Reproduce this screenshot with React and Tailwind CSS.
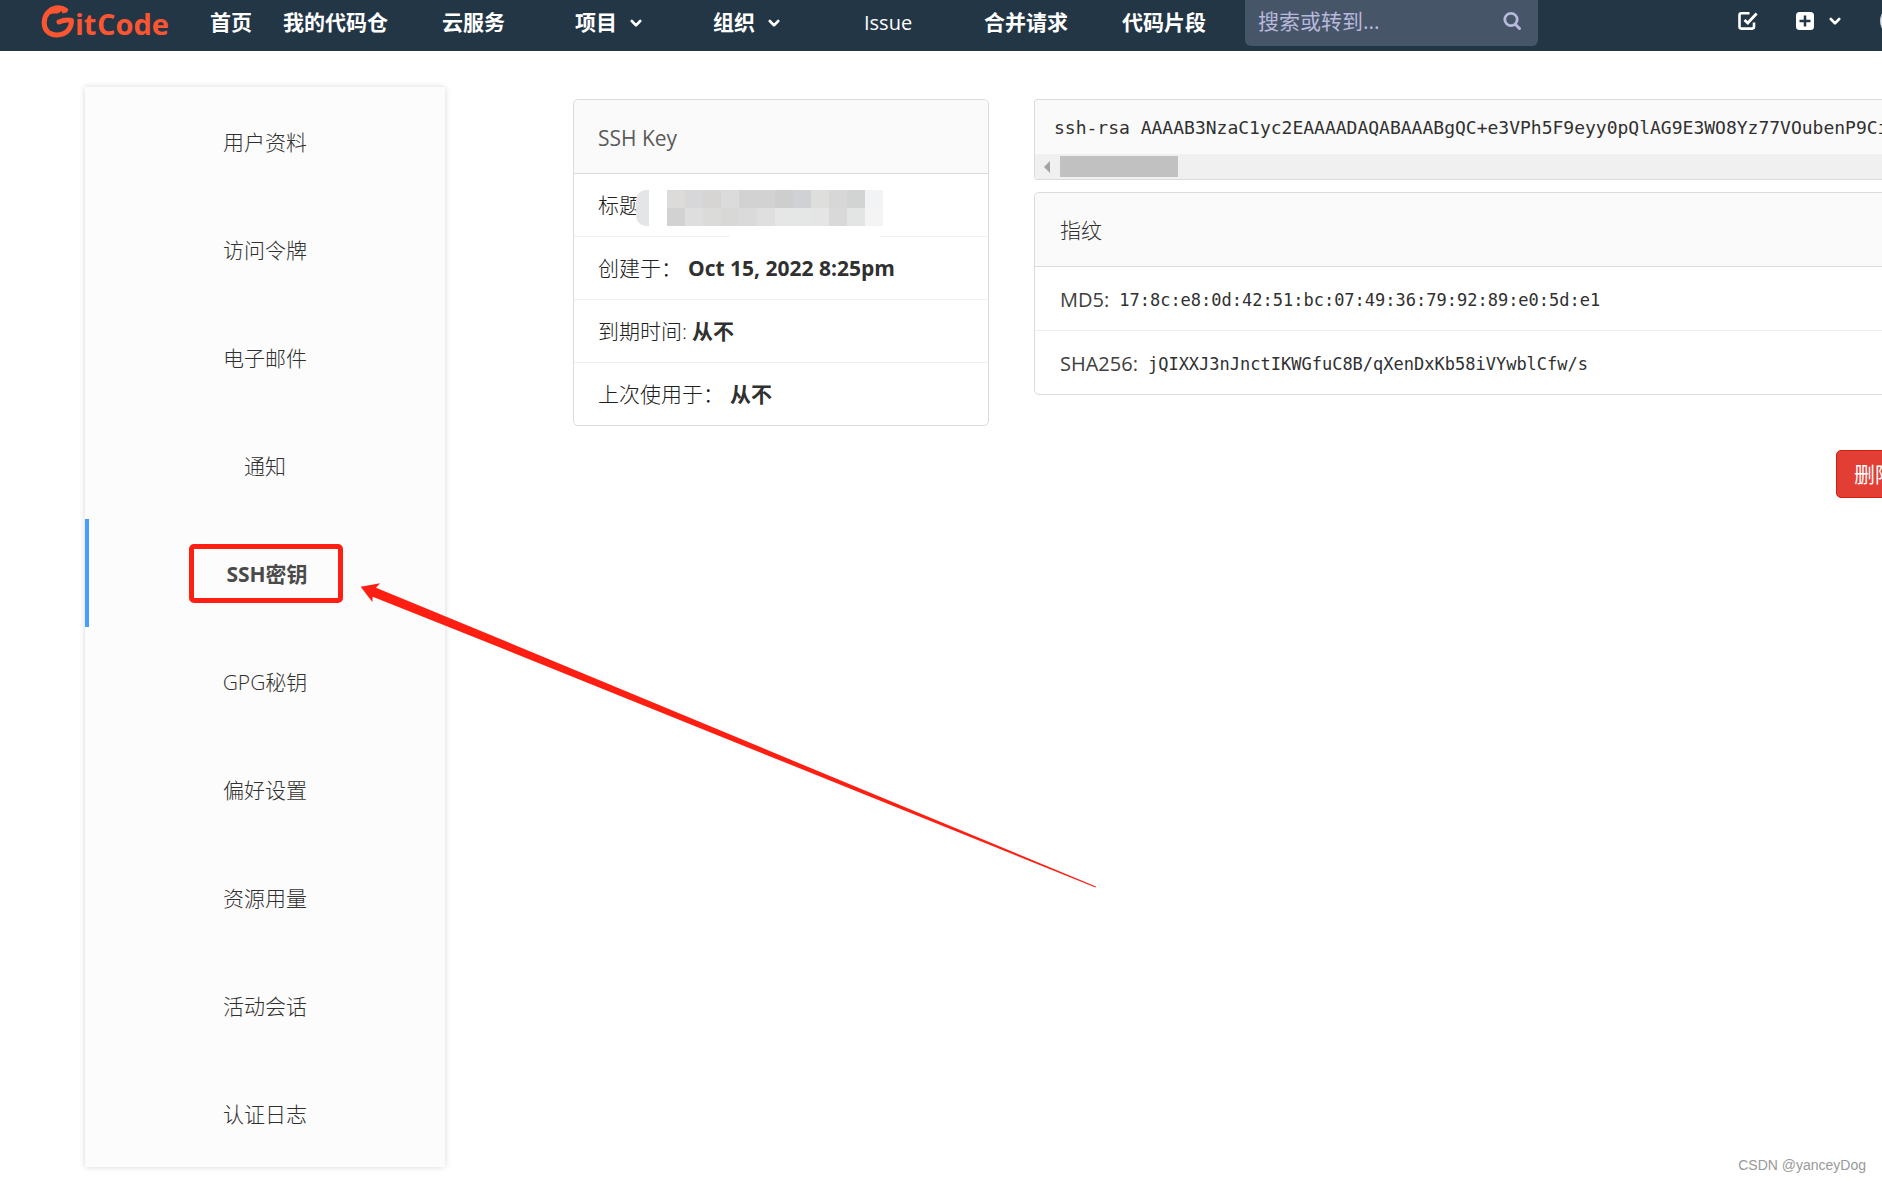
import React from "react";

const navItems = [
  { label: "首页", className: "ml-[41px] font-bold" },
  { label: "我的代码仓", className: "ml-[31px] font-bold" },
  { label: "云服务", className: "ml-[54px] font-bold" },
  { label: "项目", className: "ml-[70px] font-bold", menu: true },
  { label: "组织", className: "ml-[71px] font-bold", menu: true },
  { label: "Issue", className: "ml-[84px] w-[49px] text-[20px]" },
  { label: "合并请求", className: "ml-[71px] font-bold" },
  { label: "代码片段", className: "ml-[54px] font-bold" },
];

const sideItems = [
  "用户资料",
  "访问令牌",
  "电子邮件",
  "通知",
  "SSH密钥",
  "GPG秘钥",
  "偏好设置",
  "资源用量",
  "活动会话",
  "认证日志",
];

const mosaicColors = [
  "#dcdbd9", "#d7d7d9", "#d6d5d3", "#dbdbdb", "#d2d2d2", "#d2d2d2",
  "#cecece", "#d0d1d4", "#dededc", "#d7d7d7", "#d2d4d4", "#f2f3f5",
  "#d2d2d2", "#dedede", "#dbdbda", "#d8d8d6", "#dadada", "#dfdfe0",
  "#e6e6e6", "#e5e7e7", "#e5e5e5", "#d9d9d9", "#e3e5e4", "#f4f4f4",
];

const Chevron = () => (
  <svg width="12" height="9" viewBox="0 0 12 9" fill="none" aria-hidden="true">
    <path
      d="M1.8 2 L6 6.4 L10.2 2"
      stroke="currentColor"
      strokeWidth="2.6"
      strokeLinecap="round"
      strokeLinejoin="round"
    />
  </svg>
);

const Logo = () => (
  <svg width="128" height="46" viewBox="0 0 128 46" role="img" aria-label="GitCode">
    <path
      d="M24.5 10 C19 6 11 7.5 7 12.5 C2 18 2.2 27 6 31 C11 36.5 21.5 36 26.5 31 C29.5 28 30.5 24.5 30.5 20.5 C26 19.5 22 20.2 18 22"
      fill="none"
      stroke="#fc5531"
      strokeWidth="5"
      strokeLinecap="round"
      strokeLinejoin="round"
    />
    <path d="M5 18 L7 13 L7.6 12.2 L9 14.6 L12 13.4 H17 L20.4 11 L21.6 13.4 L25 12.6 L24 8 L14 7 L7 10 Z" fill="#fc5531" />
    <g fill="#fc5531" fontFamily="'Open Sans', sans-serif" fontWeight="700">
      <text x="34" y="35" fontSize="29">it</text>
      <text x="56" y="35" fontSize="29">Code</text>
    </g>
  </svg>
);

const Header = () => (
  <header className="h-[51px] bg-[#233646] text-white">
    <div className="flex h-[46px] w-[calc(100%+32px)] items-center pl-[41px]">
      <a href="#home" className="shrink-0">
        <Logo />
      </a>
      <nav className="flex shrink-0 items-center whitespace-nowrap text-[21px]">
        {navItems.map((item) => (
          <a
            key={item.label}
            href="#nav"
            className={`flex items-center gap-[13px] ${item.className}`}
          >
            {item.label}
            {item.menu && <Chevron />}
          </a>
        ))}
      </nav>
      <div className="ml-[39px] flex h-[46px] w-[293px] shrink-0 items-center rounded-b-[6px] bg-[#475569] pr-4 pb-[2px] pl-[13px]">
        <input
          type="text"
          aria-label="搜索或转到"
          placeholder="搜索或转到..."
          className="min-w-0 flex-1 bg-transparent text-[21px] outline-none placeholder:text-[#b7b9dc]"
        />
        <svg width="20" height="24" viewBox="0 0 20 24" fill="none" aria-hidden="true">
          <circle cx="9" cy="9.5" r="6.2" stroke="#b7b9dc" strokeWidth="2.8" />
          <path d="M13.5 14.5 L17.5 18.5" stroke="#b7b9dc" strokeWidth="3" strokeLinecap="round" />
        </svg>
      </div>
      <div className="ml-auto flex items-center pb-1">
        <button type="button" aria-label="待办事项" className="mr-[38px]">
          <svg width="20" height="20" viewBox="0 0 20 20" fill="none">
            <path
              d="M11.5 2.3 H3.3 Q1.5 2.3 1.5 4 V15.6 Q1.5 17.6 3.3 17.6 H14.2 Q16 17.6 16 15.6 V11.5"
              stroke="white"
              strokeWidth="2.6"
            />
            <path d="M6.5 9 L9.8 12 L18.6 2.5" stroke="white" strokeWidth="2.8" />
          </svg>
        </button>
        <button type="button" aria-label="新建" className="mr-[39px] flex items-center gap-[15px]">
          <svg width="18" height="18" viewBox="0 0 18 18">
            <rect width="18" height="18" rx="3.5" fill="white" />
            <path d="M9 3.5 V14.5 M3.5 9 H14.5" stroke="#233646" strokeWidth="2.5" />
          </svg>
          <Chevron />
        </button>
        <button
          type="button"
          aria-label="用户"
          className="size-[34px] rounded-full border border-[#c5cbd3] bg-[#e8eaf0]"
        />
      </div>
    </div>
  </header>
);

const SideMenu = () => (
  <aside className="w-[360px] shrink-0 bg-[#fcfcfc] shadow-[0_0_6px_rgba(0,0,0,0.16)]">
    <ul>
      {sideItems.map((item) => {
        const active = item === "SSH密钥";
        return (
          <li key={item}>
            <a
              href="#settings"
              className={`relative flex h-[108px] items-center justify-center pt-1 text-[21px] ${
                active ? "border-l-4 border-[#459fff] font-bold text-[#4a4a4a]" : "font-light text-[#303030]"
              }`}
            >
              {item}
              {active && (
                <span className="absolute top-[25px] left-[100px] h-[59px] w-[154px] rounded-[5px] border-5 border-[#ff1f12]" />
              )}
            </a>
          </li>
        );
      })}
    </ul>
  </aside>
);

// pixelated cover over the key title
const Mosaic = () => (
  <div className="absolute top-2 left-[62px] flex h-[57px] w-[256px] items-start pt-2">
    <div className="h-9 w-[13px] rounded-l-[10px] bg-[#e4e5e7]" />
    <div className="ml-[18px] grid grid-cols-12">
      {mosaicColors.map((color, i) => (
        <span key={i} className="size-[18px]" style={{ backgroundColor: color }} />
      ))}
    </div>
    <div className="absolute right-[12px] bottom-0 h-3 w-[150px] bg-white" />
  </div>
);

const KeyCard = () => (
  <section className="w-[416px] shrink-0 rounded-[5px] border border-[#dbdbdb] text-[21px] font-light text-[#202020]">
    <h2 className="flex h-[74px] items-center rounded-t-[5px] border-b border-[#dbdbdb] bg-[#fafafa] px-6 pt-1 font-normal text-[#5a5a5a]">
      SSH Key
    </h2>
    <ul className="divide-y divide-[#f0f0f0]">
      <li className="relative z-10 flex h-[63px] items-center px-6 pt-[2px]">
        标题
        <Mosaic />
      </li>
      <li className="flex h-[63px] items-center gap-[6px] px-6 pt-[2px]">
        创建于：<strong className="font-bold text-[#303030]">Oct 15, 2022 8:25pm</strong>
      </li>
      <li className="flex h-[63px] items-center gap-[5px] px-6 pt-[2px]">
        到期时间:<strong className="font-bold text-[#303030]">从不</strong>
      </li>
      <li className="flex h-[62px] items-center gap-[6px] px-6 pt-[2px]">
        上次使用于：<strong className="font-bold text-[#303030]">从不</strong>
      </li>
    </ul>
  </section>
);

const KeyDetails = () => (
  <div className="min-w-0 flex-1">
    <div className="overflow-hidden rounded-[3px] border border-[#dbdbdb] bg-[#fafafa]">
      <pre className="h-[54px] overflow-hidden pl-[19px] font-['DejaVu_Sans_Mono',monospace] text-[18px] leading-[55px] text-[#303030]">
        ssh-rsa AAAAB3NzaC1yc2EAAAADAQABAAABgQC+e3VPh5F9eyy0pQlAG9E3WO8Yz77VOubenP9Cit
      </pre>
      <div className="flex h-[25px] items-center gap-[10px] bg-[#f0f0f0] pl-[9px]">
        <svg width="6" height="12" viewBox="0 0 6 12" aria-hidden="true">
          <path d="M6 0 V12 L0 6 Z" fill="#a3a3a3" />
        </svg>
        <div className="h-[21px] w-[118px] bg-[#c1c1c1]" />
      </div>
    </div>

    <section className="mt-3 rounded-[5px] border border-[#dbdbdb] text-[21px] text-[#303030]">
      <h2 className="flex h-[74px] items-center rounded-t-[5px] border-b border-[#dbdbdb] bg-[#fafafa] px-[25px] pt-[2px] font-light text-[#303030]">
        指纹
      </h2>
      <dl className="divide-y divide-[#f0f0f0]">
        <div className="flex h-[64px] items-center gap-[10px] px-[25px] pt-[2px]">
          <dt className="text-[20px] text-[#404040]">MD5:</dt>
          <dd className="pt-[2px] font-['DejaVu_Sans_Mono',monospace] text-[17px]">
            17:8c:e8:0d:42:51:bc:07:49:36:79:92:89:e0:5d:e1
          </dd>
        </div>
        <div className="flex h-[63px] items-center gap-[10px] px-[25px] pt-[2px]">
          <dt className="text-[20px] text-[#404040]">SHA256:</dt>
          <dd className="pt-[2px] font-['DejaVu_Sans_Mono',monospace] text-[17px]">
            jQIXXJ3nJnctIKWGfuC8B/qXenDxKb58iVYwblCfw/s
          </dd>
        </div>
      </dl>
    </section>

    <div className="mt-[55px] flex justify-end">
      <button
        type="button"
        className="h-12 rounded-[5px] border border-[#d12012] bg-[#e33e33] px-[17px] pt-[2px] text-[21px] text-white"
      >
        删除
      </button>
    </div>
  </div>
);

const App = () => {
  return (
    <div className="relative min-h-screen overflow-hidden bg-white font-['Open_Sans','Noto_Sans_CJK_SC',sans-serif]">
      <Header />
      <main className="flex w-[calc(100%+32px)] pt-9 pl-[85px]">
        <SideMenu />
        <div className="ml-32 flex min-w-0 flex-1 items-start gap-[45px] pt-3">
          <KeyCard />
          <KeyDetails />
        </div>
      </main>

      {/* Arrow pointing at the SSH menu entry */}
      <svg
        className="pointer-events-none absolute top-[580px] left-[360px]"
        width="740"
        height="310"
        viewBox="0 0 740 310"
        aria-hidden="true"
      >
        <path d="M0.7 6.7 L20 3.3 L16 7.7 L110 46.5 L736 306.5 L735.5 307.5 L110 55.5 L12.7 16.7 L12.3 22 Z" fill="#ff1f12" />
      </svg>

      <footer className="absolute right-4 bottom-2 font-['Liberation_Sans',sans-serif] text-[14px] leading-[18px] text-[#999]">
        CSDN @yanceyDog
      </footer>
    </div>
  );
};

export default App;
